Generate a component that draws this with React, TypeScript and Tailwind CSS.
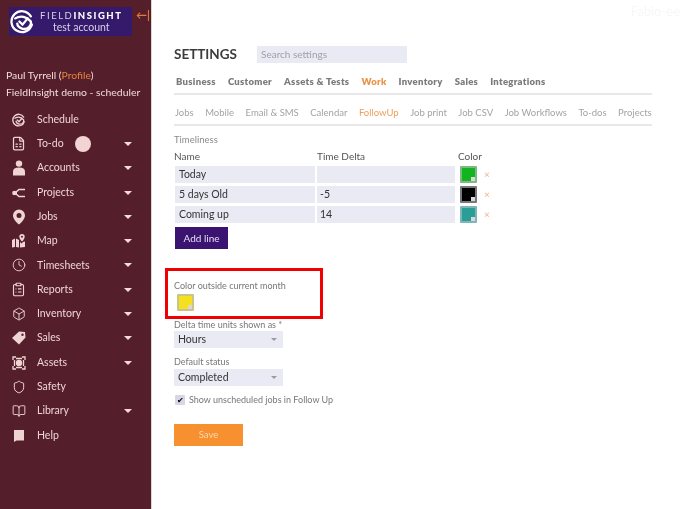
import {
  Clock,
  FileSpreadsheet,
  Box,
  Shield,
  BookOpen,
  ClipboardList,
} from 'lucide-react'
import type { ReactNode } from 'react'

function Caret() {
  return <span className="ml-auto mr-[19px] h-0 w-0 border-x-[4px] border-t-[4px] border-x-transparent border-t-[#f5dcdc]" />
}

function ScheduleIcon({ size = 14 }: { size?: number }) {
  return (
    <svg width={size} height={size} viewBox="0 0 24 24" fill="none" stroke="currentColor" strokeWidth="2.2" strokeLinecap="round">
      <path d="M20 7A10 10 0 1 0 21 15" />
      <path d="M5 9c5-3 11-2 15 3 1 4-3 8-8 7-3-1-5-3-5-5" />
      <path d="M9 12l3 3 5-6" />
    </svg>
  )
}

const solid = { fill: 'currentColor', stroke: 'none' }

const NAV: { label: string; icon: ReactNode; caret?: boolean; badge?: boolean }[] = [
  { label: 'Schedule', icon: <ScheduleIcon /> },
  { label: 'To-do', icon: <FileSpreadsheet size={15} />, caret: true, badge: true },
  {
    label: 'Accounts',
    caret: true,
    icon: (
      <svg width="14" height="16" viewBox="0 0 14 16" {...solid}>
        <circle cx="7" cy="3.6" r="3.2" />
        <path d="M1 15.5v-4C1 9 3 7.6 7 7.6s6 1.4 6 3.9v4z" />
      </svg>
    ),
  },
  {
    label: 'Projects',
    caret: true,
    icon: (
      <svg width="14" height="14" viewBox="0 0 14 14" fill="none" stroke="currentColor" strokeWidth="1.5">
        <path d="M3 7l4-3.5h6M3 7h2M3 7l4 3.5h6" />
        <circle cx="2.5" cy="7" r="1.6" fill="currentColor" />
      </svg>
    ),
  },
  {
    label: 'Jobs',
    caret: true,
    icon: (
      <svg width="14" height="16" viewBox="0 0 14 16" {...solid}>
        <path fillRule="evenodd" d="M7 .5a6 6 0 0 1 6 6c0 3.500-3.500 7-6 9-2.500-2-6-5.500-6-9a6 6 0 0 1 6-6zm0 3.500a2.500 2.500 0 1 0 0 5 2.500 2.500 0 0 0 0-5z" />
      </svg>
    ),
  },
  {
    label: 'Map',
    caret: true,
    icon: (
      <svg width="15" height="14" viewBox="0 0 15 14" {...solid}>
        <path d="M1 6l3-1.500V13l-3 .5zM5 4.500l3 1.500v7.500l-3-.5zM9 8l1.500 1.500L12 8l2-.5v5.500l-5 .5z" />
        <path fillRule="evenodd" d="M11 0a2.700 2.700 0 0 1 2.700 2.700C13.700 4.500 12 6.500 11 7.500 10 6.500 8.300 4.500 8.300 2.700A2.700 2.700 0 0 1 11 0zm0 1.700a1 1 0 1 0 0 2 1 1 0 0 0 0-2z" />
      </svg>
    ),
  },
  { label: 'Timesheets', caret: true, icon: <Clock size={14} strokeWidth={1.5} /> },
  { label: 'Reports', caret: true, icon: <ClipboardList size={15} strokeWidth={1.8} /> },
  { label: 'Inventory', caret: true, icon: <Box size={14} strokeWidth={1.6} /> },
  {
    label: 'Sales',
    caret: true,
    icon: (
      <svg width="15" height="14" viewBox="0 0 15 14" {...solid}>
        <path fillRule="evenodd" d="M8 .5l6 .5.500 5.500L8 13.500 1 7zm3.500 2a1.200 1.200 0 1 0 0 2.400 1.200 1.200 0 0 0 0-2.400z" />
      </svg>
    ),
  },
  {
    label: 'Assets',
    caret: true,
    icon: (
      <svg width="14" height="14" viewBox="0 0 14 14" fill="none" stroke="currentColor" strokeWidth="1.3">
        <path d="M1 4V1h3M10 1h3v3M13 10v3h-3M4 13H1v-3M4 2.500h6M4 11.500h6M2.500 4v6M11.500 4v6" />
        <circle cx="7" cy="7" r="2.500" fill="currentColor" />
      </svg>
    ),
  },
  { label: 'Safety', icon: <Shield size={14} strokeWidth={1.7} /> },
  { label: 'Library', caret: true, icon: <BookOpen size={14} strokeWidth={1.6} /> },
  {
    label: 'Help',
    icon: (
      <svg width="14" height="14" viewBox="0 0 14 14" {...solid}>
        <path d="M2 1h10v10.500H4.500L2 13z" />
      </svg>
    ),
  },
]

const TOP_TABS = ['Business', 'Customer', 'Assets & Tests', 'Work', 'Inventory', 'Sales', 'Integrations']
const SUB_TABS = ['Jobs', 'Mobile', 'Email & SMS', 'Calendar', 'FollowUp', 'Job print', 'Job CSV', 'Job Workflows', 'To-dos', 'Projects']

const ROWS = [
  { name: 'Today', delta: '', color: 'bg-[#12b51f]', edge: 'border-[#7fb884]' },
  { name: '5 days Old', delta: '-5', color: 'bg-black', edge: 'border-[#77777c]' },
  { name: 'Coming up', delta: '14', color: 'bg-[#2a9d96]', edge: 'border-[#7fb5b8]' },
]

function Swatch({ color, edge }: { color: string; edge: string }) {
  return (
    <span className={`relative block h-[17px] w-[17px] rounded-[1px] border-2 ${edge} ${color}`}>
      <span className="absolute bottom-0 right-0 h-[4px] w-[4px] bg-[#d8d8d8]" />
    </span>
  )
}

function SelectBox({ value }: { value: string }) {
  return (
    <div className="flex h-[17px] w-[109px] items-center justify-between bg-[#e9eaf3] pl-1 pr-[6px] text-[10.5px] text-[#333]">
      {value}
      <span className="h-0 w-0 border-x-[3px] border-t-[3px] border-x-transparent border-t-[#9a9aa0]" />
    </div>
  )
}

export default function App() {
  return (
    <div className="flex h-[509px] w-[682px] overflow-hidden bg-white font-['Lato',sans-serif] blur-[0.4px]">
      <aside className="flex w-[152px] shrink-0 flex-col border-r border-[#d8d8d8] bg-[#541f2b] text-[#f0d4d4]">
        <div className="flex items-start pl-[9px] pt-[7px]">
          <div className="flex h-[29px] w-[123px] items-center gap-[5px] bg-[#35196b] pl-[1px] text-white">
            <ScheduleIcon size={25} />
            <div className="flex flex-col items-center leading-none">
              <span className="whitespace-nowrap text-[9.5px] tracking-[1.55px] text-[#d6d3ea]">
                FIELD<b className="font-black text-white">INSIGHT</b>
              </span>
              <span className="mt-[2px] text-[10.5px] text-[#d6d3ea]">test account</span>
            </div>
          </div>
          <span className="ml-[4px] mt-[2px] text-[11px] font-bold leading-none text-[#e07b3a]">←|</span>
        </div>

        <div className="mt-[31px] pl-[6px] text-[10.4px] leading-[17px] text-[#f3dcdc]">
          <div>
            Paul Tyrrell (<span className="text-[#e8813c]">Profile</span>)
          </div>
          <div>FieldInsight demo - scheduler</div>
        </div>

        <nav className="mt-[6.500px] flex flex-col">
          {NAV.map((item) => (
            <div key={item.label} className="flex h-[24.3px] items-center text-[10.5px] text-[#f0d4d4]">
              <span className="flex w-[37px] shrink-0 justify-center">{item.icon}</span>
              <span>{item.label}</span>
              {item.badge && <span className="ml-[11px] h-[16px] w-[16px] rounded-full bg-[#f3d3d3]" />}
              {item.caret && <Caret />}
            </div>
          ))}
        </nav>
      </aside>

      <main className="relative min-w-0 flex-1 pl-[22px] pr-[30px]">
        <div className="-mr-[28px] flex h-[24px] items-center justify-end text-[13px] text-[#f7f7f7]">Fabio-ee</div>

        <div className="mt-[20px] flex h-[20px] items-center">
          <h1 className="w-[83px] text-[13.5px] font-bold text-[#3b3b3b]">SETTINGS</h1>
          <div className="flex h-[17px] w-[150px] items-center bg-[#e9eaf3] pl-1 text-[10px] text-[#a0a0a8]">Search settings</div>
        </div>

        <div className="mt-[10px] flex h-[21px] items-center gap-[12px] whitespace-nowrap border-b-2 border-[#e8e8e8] pl-[2px] pb-[2px] text-[9.5px] font-extrabold tracking-[0.3px] text-[#7b7b7b]">
          {TOP_TABS.map((tab) => (
            <span key={tab} className={tab === 'Work' ? 'text-[#e8944a]' : undefined}>
              {tab}
            </span>
          ))}
        </div>

        <div className="flex h-[31px] items-center gap-[11.5px] whitespace-nowrap border-b-2 border-[#e8e8e8] pl-[1px] pt-[8px] text-[9.5px] text-[#a3a3a3]">
          {SUB_TABS.map((tab) => (
            <span key={tab} className={tab === 'FollowUp' ? 'text-[#eda05c]' : undefined}>
              {tab}
            </span>
          ))}
        </div>

        <div className="mt-[8px] text-[9.5px] leading-[12px] text-[#8a8a8a]">Timeliness</div>
        <div className="mt-[3px] flex h-[15px] items-center text-[10px] text-[#555]">
          <span className="w-[143px]">Name</span>
          <span className="w-[141px]">Time Delta</span>
          <span>Color</span>
        </div>

        <div className="mt-[2px] flex flex-col gap-[3px]">
          {ROWS.map((row) => (
            <div key={row.name} className="flex h-[17px] items-center text-[10.5px] text-[#333]">
              <span className="ml-[1px] flex h-full w-[140px] items-center bg-[#e9eaf3] pl-[4px]">{row.name}</span>
              <span className="ml-[2px] flex h-full w-[138px] items-center bg-[#e9eaf3] pl-[3px]">{row.delta}</span>
              <span className="ml-[5px]">
                <Swatch color={row.color} edge={row.edge} />
              </span>
              <span className="ml-[7px] text-[10px] text-[#eeb58a]">×</span>
            </div>
          ))}
        </div>

        <button type="button" className="ml-[1px] mt-[4px] h-[22px] w-[53px] bg-[#3a1470] text-[10px] text-[#e5def2]">
          Add line
        </button>

        <div className="mt-[31px] text-[9px] leading-[12px] text-[#777]">Color outside current month</div>
        <div className="ml-[3px] mt-[2px]">
          <Swatch color="bg-[#f5e020]" edge="border-[#c9c48a]" />
        </div>

        <div className="mt-[8px] text-[9px] leading-[12px] text-[#777]">Delta time units shown as *</div>
        <div className="mt-0">
          <SelectBox value="Hours" />
        </div>

        <div className="mt-[8px] text-[9px] leading-[12px] text-[#777]">Default status</div>
        <div className="mt-[1px]">
          <SelectBox value="Completed" />
        </div>

        <label className="mt-[8px] flex h-[12px] items-center gap-[4px] pl-[1px] text-[9px] text-[#777]">
          <span className="flex h-[10px] w-[10px] items-center justify-center rounded-[1px] bg-[#d8d6e6] text-[8px] leading-none text-black">✔</span>
          Show unscheduled jobs in Follow Up
        </label>

        <button type="button" className="mt-[18px] block h-[22px] w-[69px] bg-[#f7902f] text-[9.5px] text-[#fbd9b5]">
          Save
        </button>

        {/* red callout drawn over the page */}
        <div className="absolute left-[13px] top-[268px] h-[51px] w-[158px] border-[3px] border-[#f00000]" />
      </main>
    </div>
  )
}
